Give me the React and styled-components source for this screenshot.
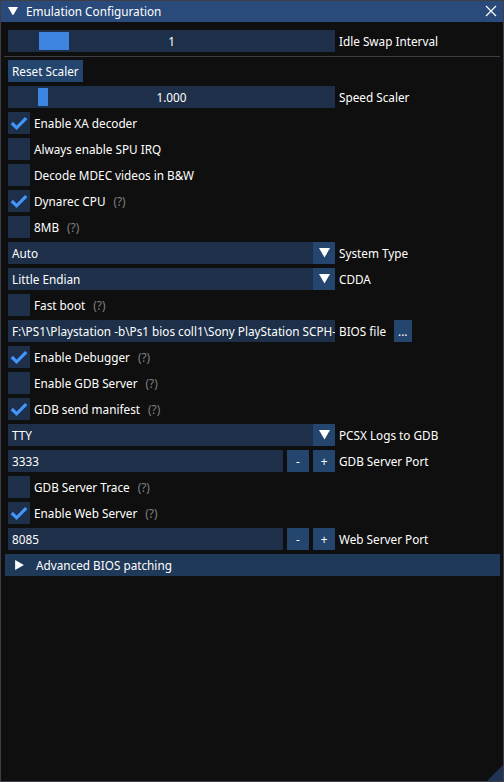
import styled, { createGlobalStyle } from "styled-components";

const GlobalStyle = createGlobalStyle`
  html, body {
    margin: 0;
    padding: 0;
    background: #0f0f0f;
  }
  body {
    font-family: "Noto Sans", "DejaVu Sans", sans-serif;
    font-size: 11.75px;
    line-height: 16px;
    color: #ffffff;
  }
`;

const Window = styled.div`
  position: relative;
  width: 504px;
  height: 782px;
  background: #0f0f0f;
  overflow: hidden;

  &::after {
    content: "";
    position: absolute;
    inset: 0;
    border: 1px solid #3e3e47;
    pointer-events: none;
  }
`;

const TitleBar = styled.div`
  display: flex;
  align-items: center;
  height: 22px;
  background: #294a7a;
  padding-left: 8px;
  padding-right: 7px;

  .title {
    margin-left: 8px;
    flex: 1;
  }
`;

const Body = styled.div`
  display: flex;
  flex-direction: column;
  gap: 4px;
  padding: 8px;
`;

const Row = styled.div`
  display: flex;
  align-items: center;
  height: 22px;
  white-space: nowrap;
`;

const Separator = styled.div`
  height: 1px;
  background: #3e3e47;
  margin: 0 -4px -1px -4px;
`;

const Frame = styled.div`
  position: relative;
  display: flex;
  align-items: center;
  justify-content: ${(p) => (p.$center ? "center" : "flex-start")};
  width: ${(p) => p.$w || 327}px;
  height: 22px;
  padding: ${(p) => (p.$clip ? "0 0 0 4px" : "0 4px")};
  box-sizing: border-box;
  background: #1d2f49;
  overflow: hidden;
  white-space: nowrap;
  flex-shrink: 0;
`;

const FrameText = styled.span`
  position: relative;
  display: block;
  min-width: 0;
  overflow: hidden;
  text-overflow: clip;
`;

const Grab = styled.div`
  position: absolute;
  top: 2px;
  bottom: 2px;
  background: #3d85e0;
`;

const Label = styled.span`
  margin-left: 4px;
`;

const Help = styled.span`
  margin-left: 8px;
  color: #808080;
`;

const Button = styled.div`
  display: flex;
  align-items: center;
  justify-content: center;
  height: 22px;
  min-width: ${(p) => (p.$square ? "22px" : "auto")};
  padding: ${(p) => (p.$square ? "0" : "0 4px")};
  margin-left: ${(p) => p.$gap || 0}px;
  box-sizing: border-box;
  background: #24456d;
`;

const ComboBox = styled.div`
  display: flex;
  width: 327px;
  height: 22px;
  background: #1d2f49;

  .value {
    flex: 1;
    padding-left: 4px;
    line-height: 22px;
  }
`;

const ArrowBox = styled.div`
  display: flex;
  align-items: center;
  justify-content: center;
  width: 22px;
  height: 22px;
  background: #24456d;
`;

const CheckBox = styled.div`
  width: 22px;
  height: 22px;
  background: #1d2f49;
  flex-shrink: 0;

  svg {
    display: block;
  }
`;

const Header = styled.div`
  display: flex;
  align-items: center;
  height: 22px;
  margin: 0 -4px 0 -3px;
  padding-left: 10px;
  background: #1f3958;

  .text {
    margin-left: 12px;
  }
`;

const Grip = styled.svg`
  position: absolute;
  right: 1px;
  bottom: 1px;
`;

const TriDown = ({ size = 11 }) => (
  <svg width={size} height={size * 0.87} viewBox="0 0 10 8.7">
    <polygon points="0,0 10,0 5,8.7" fill="#fff" />
  </svg>
);

const TriRight = () => (
  <svg width="9" height="10" viewBox="0 0 8.7 10">
    <polygon points="0,0 8.7,5 0,10" fill="#fff" />
  </svg>
);

const Check = () => (
  <svg width="22" height="22" viewBox="0 0 22 22">
    <polyline
      points="3.8,11 8.6,15.8 18.2,6.2"
      fill="none"
      stroke="#4296fa"
      strokeWidth="3.2"
      strokeLinejoin="miter"
    />
  </svg>
);

const Checkbox = ({ checked, label, help }) => (
  <Row>
    <CheckBox>{checked && <Check />}</CheckBox>
    <Label>{label}</Label>
    {help && <Help>(?)</Help>}
  </Row>
);

const Slider = ({ value, grabLeft, grabWidth, label }) => (
  <Row>
    <Frame $center>
      <Grab style={{ left: grabLeft, width: grabWidth }} />
      <FrameText>{value}</FrameText>
    </Frame>
    <Label>{label}</Label>
  </Row>
);

const Combo = ({ value, label }) => (
  <Row>
    <ComboBox>
      <span className="value">{value}</span>
      <ArrowBox>
        <TriDown />
      </ArrowBox>
    </ComboBox>
    <Label>{label}</Label>
  </Row>
);

const PortInput = ({ value, label }) => (
  <Row>
    <Frame $w={275}>
      <FrameText>{value}</FrameText>
    </Frame>
    <Button $square $gap={4}>-</Button>
    <Button $square $gap={4}>+</Button>
    <Label>{label}</Label>
  </Row>
);

export default function App() {
  return (
    <>
      <GlobalStyle />
      <Window>
        <TitleBar>
          <TriDown size={10} />
          <span className="title">Emulation Configuration</span>
          <svg width="12" height="12" viewBox="0 0 12 12">
            <path d="M1 1L11 11M11 1L1 11" stroke="#fff" strokeWidth="1.2" />
          </svg>
        </TitleBar>
        <Body>
          <Slider value="1" grabLeft={31} grabWidth={30} label="Idle Swap Interval" />
          <Separator />
          <Row>
            <Button>Reset Scaler</Button>
          </Row>
          <Slider value="1.000" grabLeft={30} grabWidth={10} label="Speed Scaler" />
          <Checkbox checked label="Enable XA decoder" />
          <Checkbox label="Always enable SPU IRQ" />
          <Checkbox label="Decode MDEC videos in B&W" />
          <Checkbox checked label="Dynarec CPU" help />
          <Checkbox label="8MB" help />
          <Combo value="Auto" label="System Type" />
          <Combo value="Little Endian" label="CDDA" />
          <Checkbox label="Fast boot" help />
          <Row>
            <Frame $clip>
              <FrameText>F:\PS1\Playstation -b\Ps1 bios coll1\Sony PlayStation SCPH-1</FrameText>
            </Frame>
            <Label>BIOS file</Label>
            <Button $gap={8}>...</Button>
          </Row>
          <Checkbox checked label="Enable Debugger" help />
          <Checkbox label="Enable GDB Server" help />
          <Checkbox checked label="GDB send manifest" help />
          <Combo value="TTY" label="PCSX Logs to GDB" />
          <PortInput value="3333" label="GDB Server Port" />
          <Checkbox label="GDB Server Trace" help />
          <Checkbox checked label="Enable Web Server" help />
          <PortInput value="8085" label="Web Server Port" />
          <Header>
            <TriRight />
            <span className="text">Advanced BIOS patching</span>
          </Header>
        </Body>
        <Grip width="16" height="16" viewBox="0 0 16 16">
          <polygon points="16,0 16,16 0,16" fill="#1f3454" />
        </Grip>
      </Window>
    </>
  );
}
